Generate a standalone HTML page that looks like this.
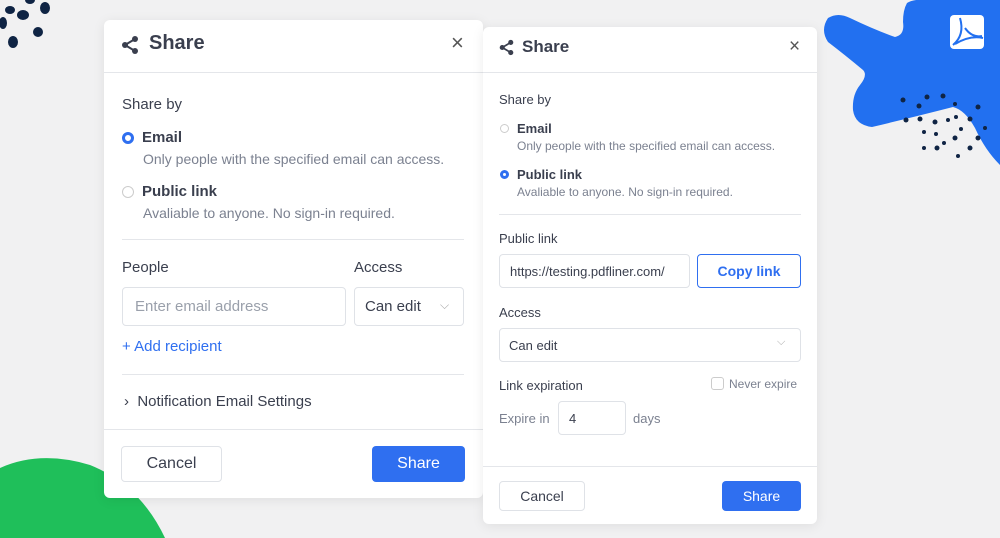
<!DOCTYPE html><html><head><style>
*{box-sizing:border-box;margin:0;padding:0}
body{width:1000px;height:538px;overflow:hidden;background:#f1f1f2;font-family:"Liberation Sans",sans-serif;color:#3a3f4e;position:relative}
.a{position:absolute}
.dlg{position:absolute;background:#fff;border-radius:6px;box-shadow:0 2px 12px rgba(0,0,0,.08)}
.line{position:absolute;height:1px;background:#e4e6ea}
.t{position:absolute;white-space:nowrap}
.g{color:#7b8190}
.box{position:absolute;border:1px solid #dfe2e7;border-radius:4px;background:#fff}
.btn{position:absolute;border-radius:4px;display:flex;align-items:center;justify-content:center}
.rad{position:absolute;border-radius:50%}
</style></head><body>
<svg class="a" style="left:0;top:0" width="60" height="55">
<g fill="#0f2444"><ellipse cx="10" cy="10" rx="5" ry="4"/><ellipse cx="23" cy="15" rx="6" ry="5"/><ellipse cx="3" cy="23" rx="4" ry="6"/><ellipse cx="13" cy="42" rx="5" ry="6"/><ellipse cx="38" cy="32" rx="5" ry="5"/><ellipse cx="45" cy="8" rx="5" ry="6"/><ellipse cx="30" cy="0" rx="5" ry="4"/></g></svg>
<svg class="a" style="left:820;top:0" width="180" height="170" viewBox="0 0 180 170">
<path d="M87 3 Q95 -2 115 0 L180 0 L180 165 Q165 150 155 128 Q145 110 133 107 Q90 118 52 127 Q35 125 33 110 Q32 95 40 85 Q48 75 43 70 Q25 55 8 42 Q0 30 8 18 Q18 12 30 18 Q55 30 75 37 Q85 35 83 22 Q83 10 87 3 Z" fill="#2270f0"/>
<rect x="130" y="15" width="34" height="34" rx="4" fill="#fff"/>
<path d="M140 18 Q145 35 133 45 M145 28 Q152 38 162 36 M135 44 Q150 35 163 38" stroke="#2270f0" stroke-width="2" fill="none"/>
<g fill="#0f2444"><circle cx="83" cy="100" r="2.5"/><circle cx="99" cy="106" r="2.5"/><circle cx="107" cy="97" r="2.5"/><circle cx="123" cy="96" r="2.5"/><circle cx="135" cy="104" r="2"/><circle cx="158" cy="107" r="2.5"/><circle cx="86" cy="120" r="2.5"/><circle cx="100" cy="119" r="2.5"/><circle cx="115" cy="122" r="2.5"/><circle cx="128" cy="120" r="2"/><circle cx="136" cy="117" r="2"/><circle cx="150" cy="119" r="2.5"/><circle cx="165" cy="128" r="2"/><circle cx="104" cy="132" r="2"/><circle cx="116" cy="134" r="2"/><circle cx="141" cy="129" r="2"/><circle cx="158" cy="138" r="2.5"/><circle cx="135" cy="138" r="2.5"/><circle cx="104" cy="148" r="2"/><circle cx="117" cy="148" r="2.5"/><circle cx="124" cy="143" r="2"/><circle cx="150" cy="148" r="2.5"/><circle cx="138" cy="156" r="2"/></g></svg>
<svg class="a" style="left:0;top:450" width="180" height="88"><path d="M0 18 Q40 0 90 15 Q140 35 165 88 L0 88 Z" fill="#1fbf5a"/></svg>

<div class="dlg" style="left:104px;top:20px;width:379px;height:478px">
<svg class="a" style="left:16px;top:15px" width="20" height="20" viewBox="0 0 20 20" fill="#3a3f4e"><circle cx="15" cy="4" r="3"/><circle cx="5" cy="10" r="3"/><circle cx="15" cy="16" r="3"/><path d="M5 10 L15 4 M5 10 L15 16" stroke="#3a3f4e" stroke-width="2"/></svg>
<div class="t" style="left:45px;top:12px;font-size:20px;font-weight:bold">Share</div>
<div class="t" style="left:347px;top:10px;font-size:22px;color:#555">×</div>
<div class="line" style="left:0;top:52px;width:379px"></div>
<div class="t" style="left:18px;top:76px;font-size:15px">Share by</div>
<div class="rad" style="left:18px;top:112px;width:12px;height:12px;border:3.5px solid #2f6ff0"></div>
<div class="t" style="left:38px;top:109px;font-size:15px;font-weight:bold">Email</div>
<div class="t g" style="left:39px;top:131px;font-size:14px">Only people with the specified email can access.</div>
<div class="rad" style="left:18px;top:166px;width:12px;height:12px;border:1px solid #ccc"></div>
<div class="t" style="left:38px;top:163px;font-size:15px;font-weight:bold">Public link</div>
<div class="t g" style="left:39px;top:185px;font-size:14px">Avaliable to anyone. No sign-in required.</div>
<div class="line" style="left:18px;top:219px;width:342px"></div>
<div class="t" style="left:18px;top:239px;font-size:15px">People</div>
<div class="t" style="left:250px;top:239px;font-size:15px">Access</div>
<div class="box" style="left:18px;top:267px;width:224px;height:39px"></div>
<div class="t" style="left:31px;top:278px;font-size:15px;color:#9aa0ab">Enter email address</div>
<div class="box" style="left:250px;top:267px;width:110px;height:39px"></div>
<div class="t" style="left:261px;top:278px;font-size:15px">Can edit</div>
<div class="t" style="left:336px;top:278px;font-size:12px;color:#aaa">⌵</div>
<div class="t" style="left:18px;top:318px;font-size:15px;color:#2f6ff0">+ Add recipient</div>
<div class="line" style="left:18px;top:354px;width:342px"></div>
<div class="t" style="left:20px;top:373px;font-size:15px">›&nbsp; Notification Email Settings</div>
<div class="line" style="left:0;top:409px;width:379px"></div>
<div class="btn" style="left:17px;top:426px;width:101px;height:36px;border:1px solid #dfe2e7;font-size:16px">Cancel</div>
<div class="btn" style="left:268px;top:426px;width:93px;height:36px;background:#2f6ff0;color:#fff;font-size:16px">Share</div>
</div>

<div class="dlg" style="left:483px;top:27px;width:334px;height:497px">
<svg class="a" style="left:15px;top:12px" width="17" height="17" viewBox="0 0 20 20" fill="#3a3f4e"><circle cx="15" cy="4" r="3"/><circle cx="5" cy="10" r="3"/><circle cx="15" cy="16" r="3"/><path d="M5 10 L15 4 M5 10 L15 16" stroke="#3a3f4e" stroke-width="2"/></svg>
<div class="t" style="left:39px;top:10px;font-size:17px;font-weight:bold">Share</div>
<div class="t" style="left:306px;top:9px;font-size:19px;color:#555">×</div>
<div class="line" style="left:0;top:45px;width:334px"></div>
<div class="t" style="left:16px;top:65px;font-size:13px">Share by</div>
<div class="rad" style="left:17px;top:97px;width:9px;height:9px;border:1px solid #ccc"></div>
<div class="t" style="left:34px;top:94px;font-size:13px;font-weight:bold">Email</div>
<div class="t g" style="left:34px;top:112px;font-size:12px">Only people with the specified email can access.</div>
<div class="rad" style="left:17px;top:143px;width:9px;height:9px;border:3px solid #2f6ff0"></div>
<div class="t" style="left:34px;top:140px;font-size:13px;font-weight:bold">Public link</div>
<div class="t g" style="left:34px;top:158px;font-size:12px">Avaliable to anyone. No sign-in required.</div>
<div class="line" style="left:16px;top:187px;width:302px"></div>
<div class="t" style="left:16px;top:204px;font-size:13px">Public link</div>
<div class="box" style="left:16px;top:227px;width:191px;height:34px"></div>
<div class="t" style="left:27px;top:237px;font-size:13px">https://testing.pdfliner.com/</div>
<div class="btn" style="left:214px;top:227px;width:104px;height:34px;border:1px solid #2f6ff0;color:#2f6ff0;font-size:14px;font-weight:bold">Copy link</div>
<div class="t" style="left:16px;top:278px;font-size:13px">Access</div>
<div class="box" style="left:16px;top:301px;width:302px;height:34px"></div>
<div class="t" style="left:26px;top:311px;font-size:13px">Can edit</div>
<div class="t" style="left:294px;top:309px;font-size:11px;color:#aaa">⌵</div>
<div class="t" style="left:16px;top:351px;font-size:13px">Link expiration</div>
<div class="a" style="left:228px;top:350px;width:13px;height:13px;border:1px solid #ccc;border-radius:3px"></div>
<div class="t g" style="left:246px;top:350px;font-size:12px">Never expire</div>
<div class="t g" style="left:16px;top:384px;font-size:13px">Expire in</div>
<div class="box" style="left:75px;top:374px;width:68px;height:34px"></div>
<div class="t" style="left:86px;top:384px;font-size:13px">4</div>
<div class="t g" style="left:150px;top:384px;font-size:13px">days</div>
<div class="line" style="left:0;top:439px;width:334px"></div>
<div class="btn" style="left:16px;top:454px;width:86px;height:30px;border:1px solid #dfe2e7;font-size:14px">Cancel</div>
<div class="btn" style="left:239px;top:454px;width:79px;height:30px;background:#2f6ff0;color:#fff;font-size:14px">Share</div>
</div>
</body></html>
